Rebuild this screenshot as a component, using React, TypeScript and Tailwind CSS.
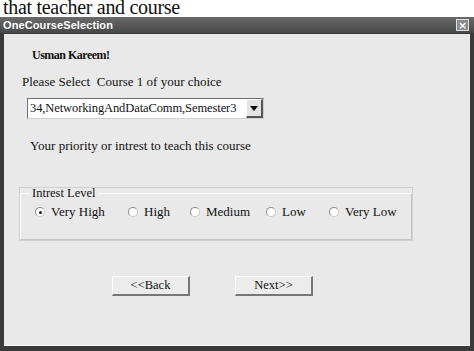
const levels = [
  { label: 'Very High', checked: true, w: 'w-[93px]' },
  { label: 'High', checked: false, w: 'w-[62px]' },
  { label: 'Medium', checked: false, w: 'w-[76px]' },
  { label: 'Low', checked: false, w: 'w-[63px]' },
  { label: 'Very Low', checked: false, w: '' },
];

function Radio({ checked }: { checked: boolean }) {
  return (
    <span className="relative inline-block w-[10px] h-[10px] rounded-full bg-white border border-[#c8c8c8] border-t-[#8a8a8a] border-l-[#8a8a8a]">
      {checked && <span className="absolute left-[2.5px] top-[2.5px] w-[3px] h-[3px] rounded-full bg-[#222]" />}
    </span>
  );
}

export default function App() {
  return (
    <div className="w-[474px] h-[351px] bg-white flex flex-col overflow-hidden font-['Liberation_Serif',serif] text-[#111]">
      <div className="h-[17px] overflow-hidden pl-[3px]">
        <p className="text-[20px] leading-[20px] -mt-[3px] tracking-[-0.3px]">that teacher and course</p>
      </div>

      <div className="flex-1 flex flex-col bg-[#3a3a3a]">
        <div className="h-[16px] flex items-center justify-between pl-[3px] pr-[5px] bg-gradient-to-b from-[#6a6a6a] to-[#474747]">
          <span className="text-white text-[11px] font-bold font-['Liberation_Sans',sans-serif] tracking-[0.1px]">OneCourseSelection</span>
          <span className="w-[13px] h-[12px] border border-[#e0e0e0] bg-[#8a8a8a] flex items-center justify-center text-white text-[11px] leading-none font-bold font-['DejaVu_Sans',sans-serif]">×</span>
        </div>

        <div className="flex-1 ml-[4px] mr-[4px] mb-[5px] mt-[1px] bg-[#e9e9e9] border-b border-white flex flex-col text-[13px] leading-[14px]">
          <p className="font-bold text-[12px] tracking-[-0.5px] ml-[28px] mt-[14px]">Usman Kareem!</p>

          <p className="ml-[18px] mt-[13px]">Please Select&nbsp; Course 1 of your choice</p>

          <div className="ml-[23px] mt-[9px] w-[237px] h-[21px] flex bg-white border border-[#6f6f6f] border-b-[#d0d0d0] border-r-[#d0d0d0]">
            <span className="flex-1 pl-[2px] pt-[2px] whitespace-nowrap overflow-hidden text-[12.5px] tracking-[-0.1px]">34,NetworkingAndDataComm,Semester3</span>
            <span className="w-[17px] h-full bg-[#e4e4e4] border-l border-t border-[#fff] border-r-2 border-b-2 border-r-[#555] border-b-[#555] flex items-center justify-center">
              <span className="w-0 h-0 border-l-[4px] border-r-[4px] border-t-[5px] border-l-transparent border-r-transparent border-t-black" />
            </span>
          </div>

          <p className="ml-[26px] mt-[20px]">Your priority or intrest to teach this course</p>

          <fieldset className="ml-[16px] mt-[35px] w-[392px] h-[52px] border border-[#c4c4c4] border-t-white border-l-white outline outline-1 outline-[#d0d0d0] pl-[14px]">
            <legend className="ml-[-5px] px-[2px] text-[12.5px] leading-[11px]">Intrest Level</legend>
            <div className="flex items-center mt-[6px]">
              {levels.map((l) => (
                <span key={l.label} className={`flex items-center gap-[6px] ${l.w}`}>
                  <Radio checked={l.checked} />
                  {l.label}
                </span>
              ))}
            </div>
          </fieldset>

          <div className="flex ml-[108px] mt-[36px] gap-[45px]">
            <button className="w-[78px] h-[20px] bg-[#ececec] border border-white border-r-2 border-b-2 border-r-[#777] border-b-[#777] text-[12.5px] leading-none">&lt;&lt;Back</button>
            <button className="w-[78px] h-[20px] bg-[#ececec] border border-white border-r-2 border-b-2 border-r-[#777] border-b-[#777] text-[12.5px] leading-none">Next&gt;&gt;</button>
          </div>
        </div>
      </div>
    </div>
  );
}
